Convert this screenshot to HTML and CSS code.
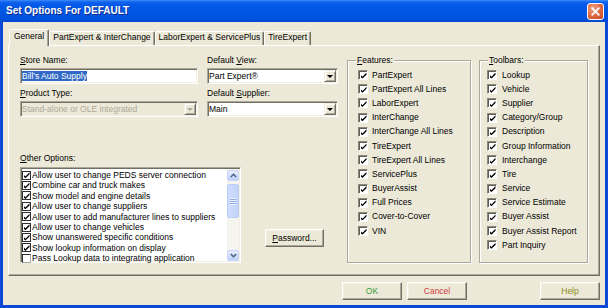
FILE: index.html
```html
<!DOCTYPE html>
<html lang="en">
<head>
<meta charset="utf-8">
<title>Set Options For DEFAULT</title>
<link rel="stylesheet" href="styles.css">
</head>
<body>
<div class="window">
  <header class="titlebar">
    <span class="title">Set Options For DEFAULT</span>
    <span class="close" aria-label="Close">
      <svg width="9" height="9" viewBox="0 0 9 9"><path d="M1.2 1.2L7.8 7.8M7.8 1.2L1.2 7.8" stroke="#fff" stroke-width="1.7" stroke-linecap="square" fill="none"/></svg>
    </span>
  </header>
  <div class="client">
    <nav class="tabs">
      <span class="tab active">General</span>
      <span class="tab">PartExpert &amp; InterChange</span>
      <span class="tab">LaborExpert &amp; ServicePlus</span>
      <span class="tab">TireExpert</span>
    </nav>
    <section class="panel">
      <div class="left">
        <div class="fields">
          <div class="field">
            <span class="label"><u>S</u>tore Name:</span>
            <div class="edit sunken"><span class="selected">Bill's Auto Supply</span></div>
          </div>
          <div class="field">
            <span class="label">Default <u>V</u>iew:</span>
            <div class="combo sunken"><span class="value">Part Expert®</span><span class="drop"><span class="arrow"></span></span></div>
          </div>
          <div class="field">
            <span class="label"><u>P</u>roduct Type:</span>
            <div class="combo sunken disabled"><span class="value">Stand-alone or OLE integrated</span><span class="drop"><span class="arrow"></span></span></div>
          </div>
          <div class="field">
            <span class="label">Default <u>S</u>upplier:</span>
            <div class="combo sunken"><span class="value">Main</span><span class="drop"><span class="arrow"></span></span></div>
          </div>
        </div>
        <div class="other">
          <div class="other-list">
            <span class="label"><u>O</u>ther Options:</span>
            <div class="listbox sunken">
              <ul class="items">
                <li><span class="lcb on"></span>Allow user to change PEDS server connection</li>
                <li><span class="lcb on"></span>Combine car and truck makes</li>
                <li><span class="lcb on"></span>Show model and engine details</li>
                <li><span class="lcb on"></span>Allow user to change suppliers</li>
                <li><span class="lcb on"></span>Allow user to add manufacturer lines to suppliers</li>
                <li><span class="lcb on"></span>Allow user to change vehicles</li>
                <li><span class="lcb on"></span>Show unanswered specific conditions</li>
                <li><span class="lcb on"></span>Show lookup information on display</li>
                <li><span class="lcb"></span>Pass Lookup data to integrating application</li>
              </ul>
              <div class="vscroll">
                <span class="sbtn"><svg width="7" height="5" viewBox="0 0 7 5"><path d="M0.8 4L3.5 1.3L6.2 4" stroke="#4d6185" stroke-width="1.5" fill="none"/></svg></span>
                <span class="thumb"><span class="grip"></span></span>
                <span class="track"></span>
                <span class="sbtn"><svg width="7" height="5" viewBox="0 0 7 5"><path d="M0.8 1L3.5 3.7L6.2 1" stroke="#4d6185" stroke-width="1.5" fill="none"/></svg></span>
              </div>
            </div>
          </div>
          <button class="btn password" type="button"><u>P</u>assword...</button>
        </div>
      </div>
      <fieldset class="group features">
        <legend><u>F</u>eatures:</legend>
        <ul class="checks">
          <li><span class="cb on"></span>PartExpert</li>
          <li><span class="cb on"></span>PartExpert All Lines</li>
          <li><span class="cb on"></span>LaborExpert</li>
          <li><span class="cb on"></span>InterChange</li>
          <li><span class="cb on"></span>InterChange All Lines</li>
          <li><span class="cb on"></span>TireExpert</li>
          <li><span class="cb on"></span>TireExpert All Lines</li>
          <li><span class="cb on"></span>ServicePlus</li>
          <li><span class="cb on"></span>BuyerAssist</li>
          <li><span class="cb on"></span>Full Prices</li>
          <li><span class="cb on"></span>Cover-to-Cover</li>
          <li><span class="cb on"></span>VIN</li>
        </ul>
      </fieldset>
      <fieldset class="group toolbars">
        <legend><u>T</u>oolbars:</legend>
        <ul class="checks">
          <li><span class="cb on"></span>Lookup</li>
          <li><span class="cb on"></span>Vehicle</li>
          <li><span class="cb on"></span>Supplier</li>
          <li><span class="cb on"></span>Category/Group</li>
          <li><span class="cb on"></span>Description</li>
          <li><span class="cb on"></span>Group Information</li>
          <li><span class="cb on"></span>Interchange</li>
          <li><span class="cb on"></span>Tire</li>
          <li><span class="cb on"></span>Service</li>
          <li><span class="cb on"></span>Service Estimate</li>
          <li><span class="cb on"></span>Buyer Assist</li>
          <li><span class="cb on"></span>Buyer Assist Report</li>
          <li><span class="cb on"></span>Part Inquiry</li>
        </ul>
      </fieldset>
    </section>
    <footer class="buttons">
      <button class="btn ok" type="button">OK</button>
      <button class="btn cancel" type="button">Cancel</button>
      <button class="btn help" type="button">Help</button>
    </footer>
  </div>
</div>
</body>
</html>
```
FILE: styles.css
```css
* { box-sizing: border-box; }
html, body { margin: 0; padding: 0; }
body {
  width: 608px;
  height: 308px;
  overflow: hidden;
  font-family: "Liberation Sans", Arial, sans-serif;
  font-size: 8.5px;
  line-height: 11px;
  color: #000;
  background: #ece9d8;
}
u { text-decoration: underline; text-underline-offset: 1px; }

.window {
  width: 608px;
  height: 308px;
  display: flex;
  flex-direction: column;
  background: #ece9d8;
}

/* Title bar */
.titlebar {
  flex: none;
  height: 22px;
  display: flex;
  align-items: center;
  justify-content: space-between;
  padding: 0 4px 0 6px;
  background: linear-gradient(to bottom, #3f8ef8 0, #0f63ee 2px, #0559e8 5px, #0055e3 13px, #0052de 19px, #0748cf 22px);
}
.title {
  color: #fff;
  font-weight: bold;
  font-size: 10px;
  line-height: 12px;
  text-shadow: 1px 1px 0 #0a2a90;
}
.close {
  width: 17px;
  height: 17px;
  border: 1px solid #fff;
  border-radius: 3px;
  background: radial-gradient(circle at 35% 30%, #f2a588 0, #e1704b 45%, #c6421d 100%);
  display: flex;
  align-items: center;
  justify-content: center;
}

/* Client area */
.client {
  flex: 1;
  display: flex;
  flex-direction: column;
  padding: 0 5px;
  border: 3px solid #0c47d8;
  border-top: 0;
}

/* Tabs */
.tabs {
  display: flex;
  align-items: flex-end;
  margin: 7px 0 -1px 1px;
  position: relative;
  z-index: 1;
}
.tab {
  height: 14px;
  margin-bottom: 1px;
  padding: 0 3px;
  border-top: 1px solid #fff;
  border-left: 1px solid #fff;
  border-right: 1px solid #716f64;
  box-shadow: inset -1px 0 0 #aca899;
  border-radius: 2px 2px 0 0;
  background: #ece9d8;
  white-space: nowrap;
  line-height: 11px;
}
.tab.active {
  height: 17px;
  margin-bottom: 0;
  padding: 1px 4px 0;
}

/* Tab page */
.panel {
  display: flex;
  padding: 9px 11px 12px 11px;
  border: 1px solid;
  border-color: #fff #716f64 #716f64 #fff;
  box-shadow: inset -1px -1px 0 #aca899;
}
.left {
  width: 318px;
  flex: none;
  display: flex;
  flex-direction: column;
}
.fields {
  display: grid;
  grid-template-columns: 178px 131px;
  column-gap: 9px;
  row-gap: 4px;
}
.label {
  display: block;
  height: 11px;
  margin-bottom: 2px;
  white-space: nowrap;
}

.sunken {
  border: 1px solid;
  border-color: #aca899 #fff #fff #aca899;
  box-shadow: inset 1px 1px 0 #716f64, inset -1px -1px 0 #f1efe2;
  padding: 1px;
  background: #fff;
}
.edit {
  height: 16px;
  display: flex;
  align-items: center;
}
.selected {
  background: #316ac5;
  color: #fff;
  line-height: 10px;
  height: 10px;
  white-space: nowrap;
}
.combo {
  height: 16px;
  display: flex;
}
.combo .value {
  flex: 1;
  line-height: 12px;
  white-space: nowrap;
  overflow: hidden;
}
.combo.disabled { background: #ece9d8; color: #aca899; }
.drop {
  width: 12px;
  flex: none;
  display: flex;
  align-items: center;
  justify-content: center;
  background: #ece9d8;
  border: 1px solid;
  border-color: #f1efe2 #716f64 #716f64 #f1efe2;
  box-shadow: inset 1px 1px 0 #fff, inset -1px -1px 0 #aca899;
}
.arrow {
  width: 0;
  height: 0;
  border-left: 3px solid transparent;
  border-right: 3px solid transparent;
  border-top: 3px solid #000;
}
.combo.disabled .arrow { border-top-color: #aca899; }

/* Other options */
.other {
  margin-top: 36px;
  display: flex;
  align-items: flex-end;
}
.other-list { width: 221px; flex: none; }
.other-list .label { margin-bottom: 3px; }
.listbox {
  height: 96px;
  display: flex;
  padding: 1px;
}
.items {
  flex: 1;
  list-style: none;
  margin: 0;
  padding: 1px 0 0 0;
}
.items li {
  display: flex;
  align-items: center;
  height: 10.4px;
  line-height: 10.4px;
  white-space: nowrap;
}
.lcb {
  width: 9px;
  height: 9px;
  flex: none;
  margin-right: 1px;
  background: #fff;
  border: 1px solid;
  border-color: #2e2e2e #a8a8a8 #a8a8a8 #2e2e2e;
  display: flex;
  align-items: center;
  justify-content: center;
}
.lcb.on { border-color: #2e2e2e; }
.lcb.on::after {
  content: "";
  width: 6px;
  height: 6px;
  background: #000;
  clip-path: polygon(0 38%, 33% 70%, 100% 0, 100% 34%, 33% 100%, 0 72%);
}

.vscroll {
  width: 12px;
  flex: none;
  display: flex;
  flex-direction: column;
  padding: 1px 0 0 0;
  background: #f5f4ef;
}
.sbtn {
  height: 11px;
  flex: none;
  border: 1px solid #c6d6fc;
  border-radius: 2px;
  background: linear-gradient(to bottom, #e6eefe, #bfd1fa);
  display: flex;
  align-items: center;
  justify-content: center;
}
.thumb {
  height: 34px;
  margin-top: 3px;
  flex: none;
  border: 1px solid #b9cdf8;
  border-radius: 2px;
  background: linear-gradient(to right, #cfdcfd, #c3d4fb);
  display: flex;
  align-items: center;
  justify-content: center;
}
.grip {
  width: 6px;
  height: 7px;
  background: repeating-linear-gradient(to bottom, #eef3ff 0 1px, #8faaf0 1px 2px);
}
.track { flex: 1; }

/* Buttons */
.btn {
  font: inherit;
  line-height: 11px;
  color: #000;
  background: #ece9d8;
  border: 1px solid;
  border-color: #fff #716f64 #716f64 #fff;
  box-shadow: inset -1px -1px 0 #aca899, inset 1px 1px 0 #f1efe2;
  padding: 0;
  height: 18px;
  flex: none;
}
.password {
  width: 59px;
  margin: 0 0 16px 24px;
}

/* Group boxes */
.group {
  margin: 0 0 0 9px;
  padding: 0;
  min-width: 0;
  border: 1px solid #aca899;
  box-shadow: inset 1px 1px 0 #fff, 1px 1px 0 #fff;
  flex: none;
}
.features { width: 124px; }
.toolbars { width: 109px; margin-left: 8px; }
.group legend {
  margin-left: 8px;
  padding: 0 1px;
  line-height: 11px;
  background: #ece9d8;
}
.checks {
  list-style: none;
  margin: 0;
  padding: 2px 0 0 10px;
}
.toolbars .checks { padding-left: 7px; }
.checks li {
  display: flex;
  align-items: center;
  height: 14.2px;
  white-space: nowrap;
}
.cb {
  width: 10px;
  height: 10px;
  flex: none;
  margin-right: 4px;
  background: #fff;
  border: 1px solid;
  border-color: #8d8a7d #fff #fff #8d8a7d;
  box-shadow: inset 1px 1px 0 #5f5d55;
  display: flex;
  align-items: center;
  justify-content: center;
}
.toolbars .cb { margin-right: 5px; }
.cb.on::after {
  content: "";
  width: 6px;
  height: 6px;
  margin: 1px 0 0 1px;
  background: #000;
  clip-path: polygon(0 38%, 33% 70%, 100% 0, 100% 34%, 33% 100%, 0 72%);
}

/* Dialog buttons */
.buttons {
  display: flex;
  justify-content: flex-end;
  gap: 5px;
  margin-top: 6px;
}
.buttons .btn { width: 60px; }
.ok { color: #3b9a3b; }
.cancel { color: #cf3c3c; }
.buttons .help { color: #8c8c22; margin-left: 68px; }
```
